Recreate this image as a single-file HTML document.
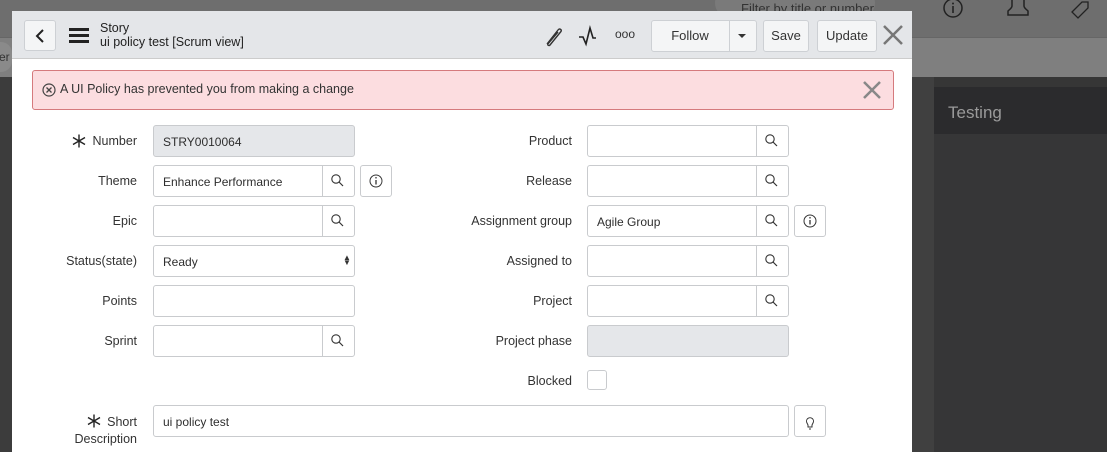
<!DOCTYPE html>
<html><head><meta charset="utf-8"><style>
*{box-sizing:border-box;margin:0;padding:0}
body{width:1107px;height:452px;overflow:hidden;position:relative;background:#363636;font-family:"Liberation Sans",sans-serif;color:#2e2e2e}
.a{position:absolute}
.bg1{left:0;top:0;width:1107px;height:37px;background:#6e6e6e}
.bg2{left:0;top:37px;width:1107px;height:40px;background:#7f7f7f;border-top:1px solid #666}
.panel{left:934px;top:87px;width:173px;height:365px;background:#363637}
.ph{left:934px;top:87px;width:173px;height:47px;background:#2b2b2d;color:#9a9a9a;font-size:17px;padding:16px 0 0 14px}
.modal{left:12px;top:11px;width:900px;height:441px;background:#fff}
.hdr{left:12px;top:11px;width:900px;height:48px;background:#e4e6e9;border-bottom:1px solid #ccc}
.btn{background:#f4f5f6;border:1px solid #cdd0d4;border-radius:3px;font-size:13px;color:#333;text-align:center}
.lbl{font-size:12.5px;color:#333;text-align:right;width:160px}
.in{border:1px solid #c9cbce;border-radius:3px;background:#fff;height:32px;font-size:12px;padding:9px 0 0 9px}
.ro{background:#e5e7ea}
.srch{position:absolute;right:0;top:0;width:32px;height:30px;border-left:1px solid #c9cbce}
.ib{border:1px solid #c9cbce;border-radius:3px;width:32px;height:32px;background:#fff}
</style></head><body>
<div class="a bg1"></div>
<div class="a" style="left:715px;top:-12px;width:160px;height:30px;border-radius:15px;background:#7a7a7a;font-size:13px;color:#333;padding:13px 0 0 26px">Filter by title or number</div>
<svg class="a" style="left:940px;top:0" width="30" height="20"><circle cx="13" cy="8" r="9" fill="none" stroke="#222" stroke-width="1.5"/><line x1="13" y1="6" x2="13" y2="13" stroke="#222" stroke-width="1.6"/><circle cx="13" cy="3.5" r="1" fill="#222"/></svg>
<svg class="a" style="left:1003px;top:0" width="30" height="20"><path d="M9 0v6c0 2-2 3-4 5v4h20v-4c-2-2-4-3-4-5V0" fill="none" stroke="#222" stroke-width="1.5"/></svg>
<svg class="a" style="left:1068px;top:0" width="26" height="20"><path d="M4 12l10-10 6 0 0 6-10 10z" fill="none" stroke="#222" stroke-width="1.3"/></svg>
<div class="a bg2"></div>
<div class="a" style="left:0;top:77px;width:12px;height:375px;background:#3c3c3c"></div>
<div class="a" style="left:-10px;top:42px;width:22px;height:30px;border-radius:12px;background:#8a8a8a;font-size:12px;color:#333;padding:8px 0 0 9px">er</div>
<div class="a" style="left:912px;top:77px;width:22px;height:375px;background:#404040"></div>
<div class="a panel"></div>
<div class="a ph">Testing</div>

<div class="a modal"></div>
<div class="a hdr"></div>
<div class="a btn" style="left:24px;top:20px;width:32px;height:31px"><svg width="30" height="29"><path d="M18 9l-6 6 6 6" fill="none" stroke="#222" stroke-width="2"/></svg></div>
<div class="a" style="left:69px;top:28px;width:20px;height:3px;background:#222"></div>
<div class="a" style="left:69px;top:34px;width:20px;height:3px;background:#222"></div>
<div class="a" style="left:69px;top:40px;width:20px;height:3px;background:#222"></div>
<div class="a" style="left:100px;top:21px;font-size:12.5px;line-height:14px;color:#222">Story<br>ui policy test [Scrum view]</div>
<svg class="a" style="left:540px;top:24px" width="26" height="24"><path d="M7 20L18 6c1.5-2 4-0.5 3 1.5L10 21c-1 1.2-3 0-2-1.2L18 8" fill="none" stroke="#333" stroke-width="1.4"/></svg>
<svg class="a" style="left:578px;top:24px" width="26" height="24"><path d="M1 13h4l3 7 4-16 3 10h3" fill="none" stroke="#222" stroke-width="1.6"/></svg>
<div class="a" style="left:615px;top:27px;font-size:12px;color:#333">ooo</div>
<div class="a btn" style="left:651px;top:20px;width:106px;height:32px"></div>
<div class="a" style="left:651px;top:28px;width:78px;font-size:13px;text-align:center;color:#333">Follow</div>
<div class="a" style="left:729px;top:21px;width:1px;height:30px;background:#cdd0d4"></div>
<div class="a" style="left:738px;top:34px;border-left:4px solid transparent;border-right:4px solid transparent;border-top:4px solid #333"></div>
<div class="a btn" style="left:763px;top:20px;width:46px;height:32px;padding-top:7px">Save</div>
<div class="a btn" style="left:817px;top:20px;width:60px;height:32px;padding-top:7px">Update</div>
<svg class="a" style="left:882px;top:24px" width="22" height="22"><path d="M2 2l18 18M20 2L2 20" stroke="#777" stroke-width="2.5"/></svg>

<div class="a" style="left:32px;top:70px;width:862px;height:40px;background:#fcdde0;border:1px solid #d57a7d;border-radius:3px"></div>
<svg class="a" style="left:42px;top:83px" width="14" height="14"><circle cx="7" cy="7" r="6" fill="none" stroke="#444" stroke-width="1.2"/><path d="M4.5 4.5l5 5M9.5 4.5l-5 5" stroke="#444" stroke-width="1.3"/></svg>
<div class="a" style="left:60px;top:82px;font-size:12.5px;color:#333">A UI Policy has prevented you from making a change</div>
<svg class="a" style="left:861px;top:79px" width="22" height="22"><path d="M3 3l16 16M19 3L3 19" stroke="#888" stroke-width="2.5"/></svg>

<!-- left col -->
<div class="a lbl" style="left:-23px;top:134px">Number</div>
<div class="a in ro" style="left:153px;top:125px;width:202px">STRY0010064</div>
<div class="a lbl" style="left:-23px;top:174px">Theme</div>
<div class="a in" style="left:153px;top:165px;width:202px">Enhance Performance<div class="srch"></div></div>
<div class="a ib" style="left:360px;top:165px"></div>
<div class="a lbl" style="left:-23px;top:214px">Epic</div>
<div class="a in" style="left:153px;top:205px;width:202px"><div class="srch"></div></div>
<div class="a lbl" style="left:-23px;top:254px">Status(state)</div>
<div class="a in" style="left:153px;top:245px;width:202px">Ready</div>
<div class="a" style="left:343px;top:255px;font-size:8px;line-height:5px;color:#333">▲<br>▼</div>
<div class="a lbl" style="left:-23px;top:294px">Points</div>
<div class="a in" style="left:153px;top:285px;width:202px"></div>
<div class="a lbl" style="left:-23px;top:334px">Sprint</div>
<div class="a in" style="left:153px;top:325px;width:202px"><div class="srch"></div></div>
<div class="a lbl" style="left:-23px;top:414px;line-height:17px">Short<br>Description</div>
<div class="a in" style="left:153px;top:405px;width:636px">ui policy test</div>
<div class="a ib" style="left:794px;top:405px"></div>

<!-- right col -->
<div class="a lbl" style="left:412px;top:134px">Product</div>
<div class="a in" style="left:587px;top:125px;width:202px"><div class="srch"></div></div>
<div class="a lbl" style="left:412px;top:174px">Release</div>
<div class="a in" style="left:587px;top:165px;width:202px"><div class="srch"></div></div>
<div class="a lbl" style="left:412px;top:214px">Assignment group</div>
<div class="a in" style="left:587px;top:205px;width:202px">Agile Group<div class="srch"></div></div>
<div class="a ib" style="left:794px;top:205px"></div>
<div class="a lbl" style="left:412px;top:254px">Assigned to</div>
<div class="a in" style="left:587px;top:245px;width:202px"><div class="srch"></div></div>
<div class="a lbl" style="left:412px;top:294px">Project</div>
<div class="a in" style="left:587px;top:285px;width:202px"><div class="srch"></div></div>
<div class="a lbl" style="left:412px;top:334px">Project phase</div>
<div class="a in ro" style="left:587px;top:325px;width:202px"></div>
<div class="a lbl" style="left:412px;top:374px">Blocked</div>
<div class="a" style="left:587px;top:370px;width:20px;height:20px;border:1px solid #c9cbce;border-radius:3px"></div>

<svg class="a" style="left:0;top:0" width="1107" height="452">
<defs><g id="s"><circle cx="0" cy="0" r="4.2" fill="none" stroke="#333" stroke-width="1.1"/><path d="M3 3l4 4" stroke="#333" stroke-width="1.2"/></g>
<g id="i"><circle cx="0" cy="0" r="6" fill="none" stroke="#333" stroke-width="1"/><path d="M0 -1v4.5" stroke="#333" stroke-width="1.3"/><circle cx="0" cy="-3.2" r=".8" fill="#333"/></g>
<g id="ast"><path d="M0 -6.5v13M-6 -3.5l12 7M-6 3.5l12 -7" stroke="#222" stroke-width="1.4"/></g></defs>
<use href="#ast" x="79" y="141"/><use href="#ast" x="94" y="421"/>
<use href="#s" x="336" y="179"/><use href="#s" x="336" y="219"/><use href="#s" x="336" y="339"/>
<use href="#s" x="770" y="139"/><use href="#s" x="770" y="179"/><use href="#s" x="770" y="219"/><use href="#s" x="770" y="259"/><use href="#s" x="770" y="299"/>
<use href="#i" x="376" y="181"/><use href="#i" x="810" y="221"/>
<path d="M807 423a3.5 3.5 0 1 1 6 0l-1 2v2h-4v-2z" fill="none" stroke="#333" stroke-width="1"/><path d="M809 429h2" stroke="#333"/>
</svg>
</body></html>
